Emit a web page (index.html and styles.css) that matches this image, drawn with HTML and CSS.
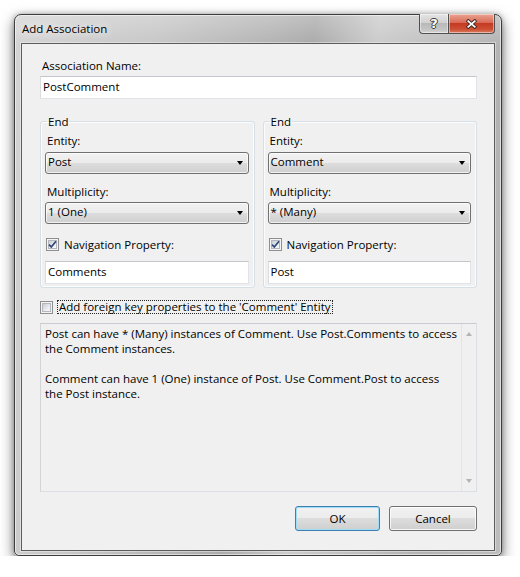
FILE: index.html
```html
<!DOCTYPE html>
<html lang="en">
<head>
  <meta charset="UTF-8" />
  <title>Add Association</title>
  <link rel="stylesheet" href="styles.css">
</head>
<body>
  <div class="window">
    <div class="titlebar">
      <span class="title">Add Association</span>
      <div class="caption-buttons">
        <button class="cap help">?</button>
        <button class="cap close">
          <svg width="13" height="10" viewBox="0 0 13 10">
            <path d="M2 1 L11 9 M11 1 L2 9" stroke="#3b2622" stroke-width="3.6" fill="none" />
            <path d="M2.6 1.6 L10.4 8.4 M10.4 1.6 L2.6 8.4" stroke="#fff" stroke-width="1.8" fill="none" />
          </svg>
        </button>
      </div>
    </div>

    <div class="client">
      <div class="label">Association Name:</div>
      <div class="textbox name">PostComment</div>

      <div class="ends">
        <fieldset class="end">
          <legend>End</legend>
          <div class="label">Entity:</div>
          <div class="combo"><span>Post</span><span class="arrow"></span></div>
          <div class="label multi">Multiplicity:</div>
          <div class="combo tight"><span>1 (One)</span><span class="arrow"></span></div>
          <div class="check-row nav">
            <span class="checkbox checked">
              <svg width="9" height="9" viewBox="0 0 9 9"><path d="M1 4.6 L3.3 7 L8 1.2" stroke="#2f4779" stroke-width="1.7" fill="none" /></svg>
            </span>
            <span>Navigation Property:</span>
          </div>
          <div class="textbox prop">Comments</div>
        </fieldset>

        <fieldset class="end">
          <legend>End</legend>
          <div class="label">Entity:</div>
          <div class="combo"><span>Comment</span><span class="arrow"></span></div>
          <div class="label multi">Multiplicity:</div>
          <div class="combo tight"><span>* (Many)</span><span class="arrow"></span></div>
          <div class="check-row nav">
            <span class="checkbox checked">
              <svg width="9" height="9" viewBox="0 0 9 9"><path d="M1 4.6 L3.3 7 L8 1.2" stroke="#2f4779" stroke-width="1.7" fill="none" /></svg>
            </span>
            <span>Navigation Property:</span>
          </div>
          <div class="textbox prop">Post</div>
        </fieldset>
      </div>

      <div class="check-row fk">
        <span class="checkbox"></span>
        <span class="focus">Add foreign key properties to the 'Comment' Entity</span>
      </div>

      <div class="description">
        <div class="desc-text">
          Post can have * (Many) instances of Comment. Use Post.Comments to access<br>
          the Comment instances.<br>
          <br>
          Comment can have 1 (One) instance of Post. Use Comment.Post to access<br>
          the Post instance.
        </div>
        <div class="scrollbar">
          <span class="sb-arrow up"></span>
          <span class="sb-arrow down"></span>
        </div>
      </div>

      <div class="buttons">
        <button class="btn default ok">OK</button>
        <button class="btn cancel">Cancel</button>
      </div>
    </div>
  </div>
</body>
</html>
```

FILE: styles.css
```css
html, body {
  margin: 0;
  background: #fff;
}
body {
  padding: 14px 0 0 14px;
  font-family: "Segoe UI", "Open Sans", sans-serif;
  font-size: 11.5px;
  line-height: 15px;
  color: #000;
}
.window {
  width: 488px;
  box-sizing: border-box;
  border: 1px solid #3c3c3c;
  border-radius: 7px 7px 5px 5px;
  padding: 0 6px 4px;
  background:
    linear-gradient(to bottom, rgba(255,255,255,0.25), rgba(255,255,255,0) 30px),
    linear-gradient(100deg, #d4d4d4 0%, #c7c7c7 25%, #b3b3b3 45%, #aaaaaa 52%, #cbcbcb 63%, #c2c2c2 72%, #b2b2b2 86%, #bdbdbd 100%);
  box-shadow: 0 5px 14px rgba(0,0,0,0.55), 0 0 5px rgba(0,0,0,0.25), inset 0 0 0 1px rgba(255,255,255,0.55);
}
.titlebar {
  height: 28px;
  display: flex;
  align-items: flex-start;
}
.title {
  padding: 6px 0 0 1px;
  font-size: 11.5px;
  text-shadow: 0 0 8px #fff, 0 0 12px rgba(255,255,255,0.8);
}
.caption-buttons {
  margin-left: auto;
  margin-top: -1px;
  display: flex;
}
.cap {
  height: 20px;
  box-sizing: border-box;
  border: 1px solid #505050;
  border-top: none;
  padding: 0;
  margin: 0;
  display: flex;
  align-items: center;
  justify-content: center;
  box-shadow: inset 0 0 0 1px rgba(255,255,255,0.45);
}
.cap.help {
  width: 29px;
  border-right: none;
  border-radius: 0 0 0 4px;
  background: linear-gradient(#e4e4e4, #d2d2d2 45%, #b9b9b9 50%, #c6c6c6 85%, #d6d6d6);
  font-family: "DejaVu Sans", sans-serif;
  font-weight: bold;
  font-size: 13px;
  color: #fff;
  text-shadow: 1px 0 0 #3a3a3a, -1px 0 0 #3a3a3a, 0 1px 0 #3a3a3a, 0 -1px 0 #3a3a3a;
}
.cap.close {
  width: 47px;
  border-radius: 0 0 4px 0;
  background: linear-gradient(#eaa594, #d96b57 45%, #c53a22 50%, #cc4e33 80%, #de7d5f);
}
.cap svg {
  display: block;
}
.client {
  border: 1px solid #5c5c5c;
  background: #f0f0f0;
  padding: 14px 17px 19px 18px;
  box-shadow: 0 0 0 1px rgba(255,255,255,0.4);
}
.label {
  padding-left: 2px;
}
.textbox {
  box-sizing: border-box;
  height: 23px;
  margin-top: 3px;
  padding: 2px 2px 0;
  background: #fff;
  border: 1px solid;
  border-color: #c4c6cb #e0e3e7 #e0e3e7 #dadce0;
  white-space: nowrap;
}
.ends {
  display: grid;
  grid-template-columns: 1fr 1fr;
  gap: 8px;
  margin-top: 15px;
}
.end {
  margin: 0;
  min-width: 0;
  padding: 4px 5px 3px 4px;
  border: 1px solid #d5dfe5;
  border-radius: 3px;
  box-shadow: inset 0 0 0 1px #fafcfd;
}
.end legend {
  margin-left: 2px;
  padding: 0 1px;
  line-height: 15px;
}
.combo {
  box-sizing: border-box;
  height: 22px;
  margin-top: 4px;
  padding: 1px 5px 0 2px;
  display: flex;
  border: 1px solid #707070;
  border-radius: 3px;
  background: linear-gradient(#f2f2f2, #ebebeb 50%, #dddddd 50%, #cfcfcf);
  box-shadow: inset 0 0 0 1px rgba(255,255,255,0.7);
}
.combo.tight {
  margin-top: 3px;
}
.arrow {
  margin-left: auto;
  align-self: center;
  margin-top: -1px;
  width: 0;
  height: 0;
  border-left: 3.5px solid transparent;
  border-right: 3.5px solid transparent;
  border-top: 4px solid #000;
}
.label.multi {
  margin-top: 10px;
}
.check-row {
  display: flex;
  align-items: center;
}
.check-row.nav {
  margin-top: 13px;
  gap: 5px;
  padding-left: 1px;
}
.textbox.prop {
  margin-top: 9px;
}
.checkbox {
  position: relative;
  flex: none;
  width: 13px;
  height: 13px;
  box-sizing: border-box;
  border: 1px solid #8e8f8f;
  background: #f4f4f4;
  padding: 1px;
}
.checkbox::before {
  content: "";
  display: block;
  width: 9px;
  height: 9px;
  box-sizing: border-box;
  border: 1px solid #b4b8be;
  background: linear-gradient(135deg, #c9cdd3, #eef0f2 70%, #f8f8f8);
}
.checkbox svg {
  position: absolute;
  left: 1px;
  top: 1px;
}
.check-row.fk {
  margin-top: 12px;
  gap: 4px;
}
.focus {
  border: 1px dotted #222;
  line-height: 12px;
  padding: 0 1px;
}
.description {
  display: flex;
  margin-top: 9px;
  height: 169px;
  box-sizing: border-box;
  border: 1px solid;
  border-color: #c8cacf #dcdfe3 #dcdfe3 #d2d4d8;
}
.desc-text {
  flex: 1;
  padding: 2px 4px;
  white-space: nowrap;
}
.scrollbar {
  width: 16px;
  border-left: 1px solid #e4e4e4;
  display: flex;
  flex-direction: column;
  justify-content: space-between;
  align-items: center;
  padding: 8px 0;
}
.sb-arrow {
  width: 0;
  height: 0;
  border-left: 3.5px solid transparent;
  border-right: 3.5px solid transparent;
}
.sb-arrow.up {
  border-bottom: 4px solid #b4b4b4;
}
.sb-arrow.down {
  border-top: 4px solid #b4b4b4;
}
.buttons {
  display: flex;
  justify-content: flex-end;
  gap: 9px;
  margin-top: 14px;
}
.btn {
  height: 25px;
  box-sizing: border-box;
  padding: 0;
  font: inherit;
  color: #000;
  border: 1px solid #707070;
  border-radius: 3px;
  background: linear-gradient(#f2f2f2, #ebebeb 50%, #dddddd 50%, #cfcfcf);
  box-shadow: inset 0 0 0 1px rgba(255,255,255,0.8);
}
.btn.ok {
  width: 85px;
}
.btn.cancel {
  width: 88px;
}
.btn.default {
  border-color: #3c7fb1;
  box-shadow: inset 0 0 0 1px #9fdcf8;
}
```
